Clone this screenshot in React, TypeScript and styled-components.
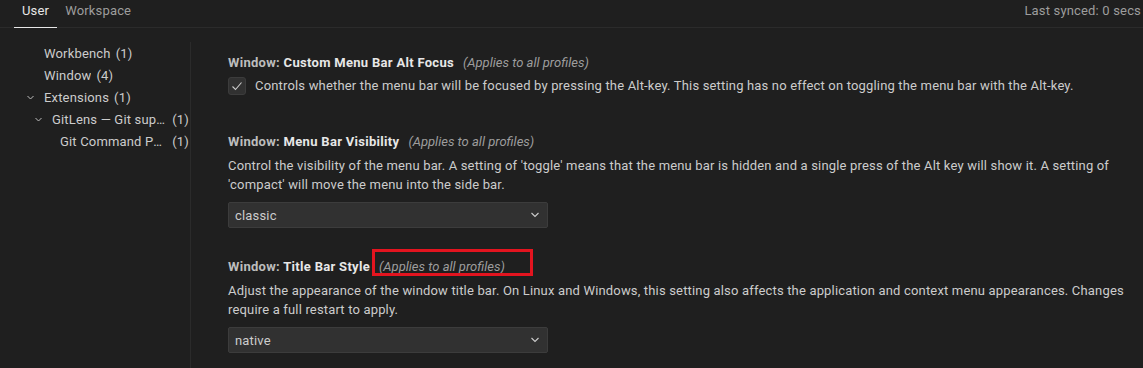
import React from 'react';
import styled, { createGlobalStyle } from 'styled-components';

const Global = createGlobalStyle`
  html, body { margin: 0; padding: 0; background: #1f1f1f; }
  body {
    font-family: Roboto, "Noto Sans", sans-serif;
    font-size: 13px;
    letter-spacing: 0.17px;
    color: #cccccc;
  }
  #root { width: 1143px; height: 368px; overflow: hidden; }
`;

const Page = styled.div`
  display: flex;
  flex-direction: column;
  width: 1143px;
  height: 368px;
  background: #1f1f1f;
`;

const Header = styled.div`
  display: flex;
  justify-content: space-between;
  height: 28px;
  box-sizing: border-box;
  border-bottom: 1px solid #2b2b2b;
  padding: 0 2px 0 14px;
  flex: none;
`;

const Tabs = styled.div`
  display: flex;
`;

const Tab = styled.div<{ $active?: boolean }>`
  height: 28px;
  box-sizing: border-box;
  padding: 0 8px;
  line-height: 22px;
  color: ${(p) => (p.$active ? '#e7e7e7' : '#9d9d9d')};
  border-bottom: 1px solid ${(p) => (p.$active ? '#e7e7e7' : 'transparent')};
`;

const Synced = styled.div`
  line-height: 22px;
  color: #9d9d9d;
`;

const Body = styled.div`
  display: flex;
  flex: 1;
  min-height: 0;
`;

const Sidebar = styled.nav`
  width: 190px;
  flex: none;
  margin-top: 14px;
  border-right: 1px solid #2b2b2b;
`;

const TreeRow = styled.div<{ $level: number }>`
  display: flex;
  align-items: center;
  height: 22px;
  padding-left: ${(p) => 22 + p.$level * 8}px;
  padding-right: 1px;
  color: #cccccc;
`;

const Twistie = styled.span`
  width: 16px;
  height: 16px;
  flex: none;
  display: flex;
  align-items: center;
  justify-content: center;
`;

const TreeLabel = styled.span`
  flex: 0 1 auto;
  min-width: 0;
  margin-left: 6px;
  white-space: nowrap;
  overflow: hidden;
  text-overflow: ellipsis;
`;

const TreeCount = styled.span`
  flex: none;
  margin-left: 5px;
  white-space: nowrap;
`;

const Content = styled.main`
  flex: 1;
  min-width: 0;
  padding: 0 10px 0 37px;
`;

const Setting = styled.section<{ $gap: number }>`
  margin-top: ${(p) => p.$gap}px;
`;

const Title = styled.div`
  line-height: 18px;
  font-weight: 700;
  white-space: nowrap;
  letter-spacing: 0.3px;
`;

const Category = styled.span`
  color: #bdbdbd;
`;

const Name = styled.span`
  color: #e7e7e7;
`;

const Scope = styled.span<{ $marked?: boolean }>`
  position: relative;
  margin-left: 9px;
  font-weight: 400;
  font-style: italic;
  letter-spacing: 0;
  color: #9d9d9d;
  &::after {
    content: '';
    display: ${(p) => (p.$marked ? 'block' : 'none')};
    position: absolute;
    left: -7px;
    right: -28px;
    top: -10px;
    bottom: -2px;
    border: 3px solid #e3141f;
  }
`;

const Description = styled.p`
  margin: 5px 0 0;
  line-height: 19px;
  color: #cccccc;
`;

const CheckRow = styled.label`
  display: flex;
  align-items: center;
  gap: 9px;
  margin-top: 5px;
  line-height: 18px;
`;

const CheckBox = styled.span`
  width: 18px;
  height: 18px;
  box-sizing: border-box;
  flex: none;
  border: 1px solid #3c3c3c;
  border-radius: 3px;
  background: #313131;
  display: flex;
  align-items: center;
  justify-content: center;
`;

const Select = styled.div`
  display: flex;
  align-items: center;
  justify-content: space-between;
  width: 320px;
  height: 26px;
  box-sizing: border-box;
  margin-top: 8px;
  padding: 0 4px 0 6px;
  background: #313131;
  border: 1px solid #3c3c3c;
  border-radius: 2px;
  color: #cccccc;
`;

const Chevron = ({ size = 16 }: { size?: number }) => (
  <svg width={size} height={size} viewBox="0 0 16 16" fill="none">
    <polyline points="4.5,6 8,9.5 11.5,6" stroke="#cccccc" strokeWidth="1.1" />
  </svg>
);

const TreeChevron = () => (
  <svg width="16" height="16" viewBox="0 0 16 16" fill="none">
    <polyline points="5.5,7 8.5,10 11.5,7" stroke="#bdbdbd" strokeWidth="1" />
  </svg>
);

const Check = () => (
  <svg width="16" height="16" viewBox="0 0 16 16" fill="none">
    <polyline points="3.5,8.5 6.5,11.5 12.5,4.5" stroke="#cccccc" strokeWidth="1.1" />
  </svg>
);

const tree = [
  { level: 0, label: 'Workbench', count: 1, twistie: false },
  { level: 0, label: 'Window', count: 4, twistie: false },
  { level: 0, label: 'Extensions', count: 1, twistie: true },
  { level: 1, label: 'GitLens — Git supercharged', count: 1, twistie: true },
  { level: 2, label: 'Git Command Palette', count: 1, twistie: false },
];

export default function App() {
  return (
    <Page>
      <Global />
      <Header>
        <Tabs>
          <Tab $active>User</Tab>
          <Tab>Workspace</Tab>
        </Tabs>
        <Synced>Last synced: 0 secs</Synced>
      </Header>
      <Body>
        <Sidebar>
          {tree.map((t) => (
            <TreeRow key={t.label} $level={t.level}>
              <Twistie>{t.twistie ? <TreeChevron /> : null}</Twistie>
              <TreeLabel>{t.label}</TreeLabel>
              <TreeCount>({t.count})</TreeCount>
            </TreeRow>
          ))}
        </Sidebar>
        <Content>
          <Setting $gap={26}>
            <Title>
              <Category>Window: </Category>
              <Name>Custom Menu Bar Alt Focus</Name>
              <Scope>(Applies to all profiles)</Scope>
            </Title>
            <CheckRow>
              <CheckBox>
                <Check />
              </CheckBox>
              <span>
                Controls whether the menu bar will be focused by pressing the Alt-key. This setting has no effect on toggling the menu bar with the Alt-key.
              </span>
            </CheckRow>
          </Setting>
          <Setting $gap={38}>
            <Title>
              <Category>Window: </Category>
              <Name>Menu Bar Visibility</Name>
              <Scope>(Applies to all profiles)</Scope>
            </Title>
            <Description>
              Control the visibility of the menu bar. A setting of 'toggle' means that the menu bar is hidden and a single press of the Alt key will show it. A setting of 'compact' will move the menu into the side bar.
            </Description>
            <Select>
              <span>classic</span>
              <Chevron />
            </Select>
          </Setting>
          <Setting $gap={30}>
            <Title>
              <Category>Window: </Category>
              <Name>Title Bar Style</Name>
              <Scope $marked>(Applies to all profiles)</Scope>
            </Title>
            <Description>
              Adjust the appearance of the window title bar. On Linux and Windows, this setting also affects the application and context menu appearances. Changes require a full restart to apply.
            </Description>
            <Select>
              <span>native</span>
              <Chevron />
            </Select>
          </Setting>
        </Content>
      </Body>
    </Page>
  );
}
